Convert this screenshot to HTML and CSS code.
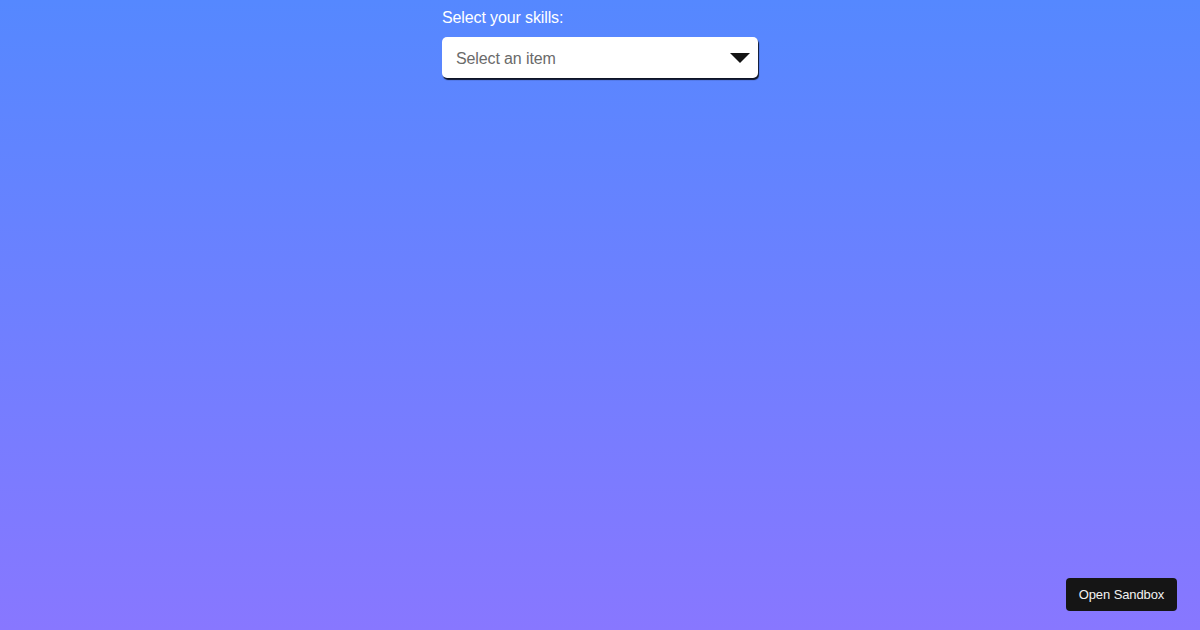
FILE: index.html
```html
<!DOCTYPE html>
<html lang="en">
<head>
<meta charset="utf-8">
<title>Select</title>
<link rel="stylesheet" href="styles.css">
</head>
<body>
<main class="page">
  <div class="field">
    <label class="label" for="skills">Select your skills:</label>
    <button class="select" id="skills" type="button">
      <span class="placeholder">Select an item</span>
      <svg class="caret" width="20" height="10" viewBox="0 0 20 10" aria-hidden="true"><path d="M0 0H20L10 10Z" fill="#141414"/></svg>
    </button>
  </div>
</main>
<a class="sandbox" href="#">Open Sandbox</a>
</body>
</html>
```
FILE: styles.css
```css
html, body {
  height: 100%;
}
body {
  margin: 0;
  font-family: "Liberation Sans", Arial, sans-serif;
  background: linear-gradient(to bottom, #5588ff 0%, #8877ff 100%);
  overflow: hidden;
}
.page {
  display: flex;
  justify-content: center;
  padding-top: 8px;
}
.field {
  width: 316px;
  display: flex;
  flex-direction: column;
}
.label {
  color: #ffffff;
  font-size: 16px;
  line-height: 20px;
  letter-spacing: -0.12px;
  margin-bottom: 9px;
}
.select {
  display: flex;
  align-items: center;
  justify-content: space-between;
  width: 316px;
  height: 41px;
  padding: 2px 8px 0 14px;
  box-sizing: border-box;
  background: #ffffff;
  border: none;
  border-radius: 5px;
  box-shadow: 1px 2px 1px rgba(0, 0, 0, 0.85);
  font-family: inherit;
  font-size: 16px;
  cursor: pointer;
}
.placeholder {
  color: #6a6a6a;
  letter-spacing: -0.12px;
}
.caret {
  display: block;
  margin-top: -2px;
}
.sandbox {
  position: fixed;
  right: 23px;
  bottom: 19px;
  width: 111px;
  height: 33px;
  display: flex;
  align-items: center;
  justify-content: center;
  background: #151515;
  color: #f2f2f2;
  font-size: 13px;
  letter-spacing: -0.1px;
  text-decoration: none;
  border-radius: 4px;
}
```
